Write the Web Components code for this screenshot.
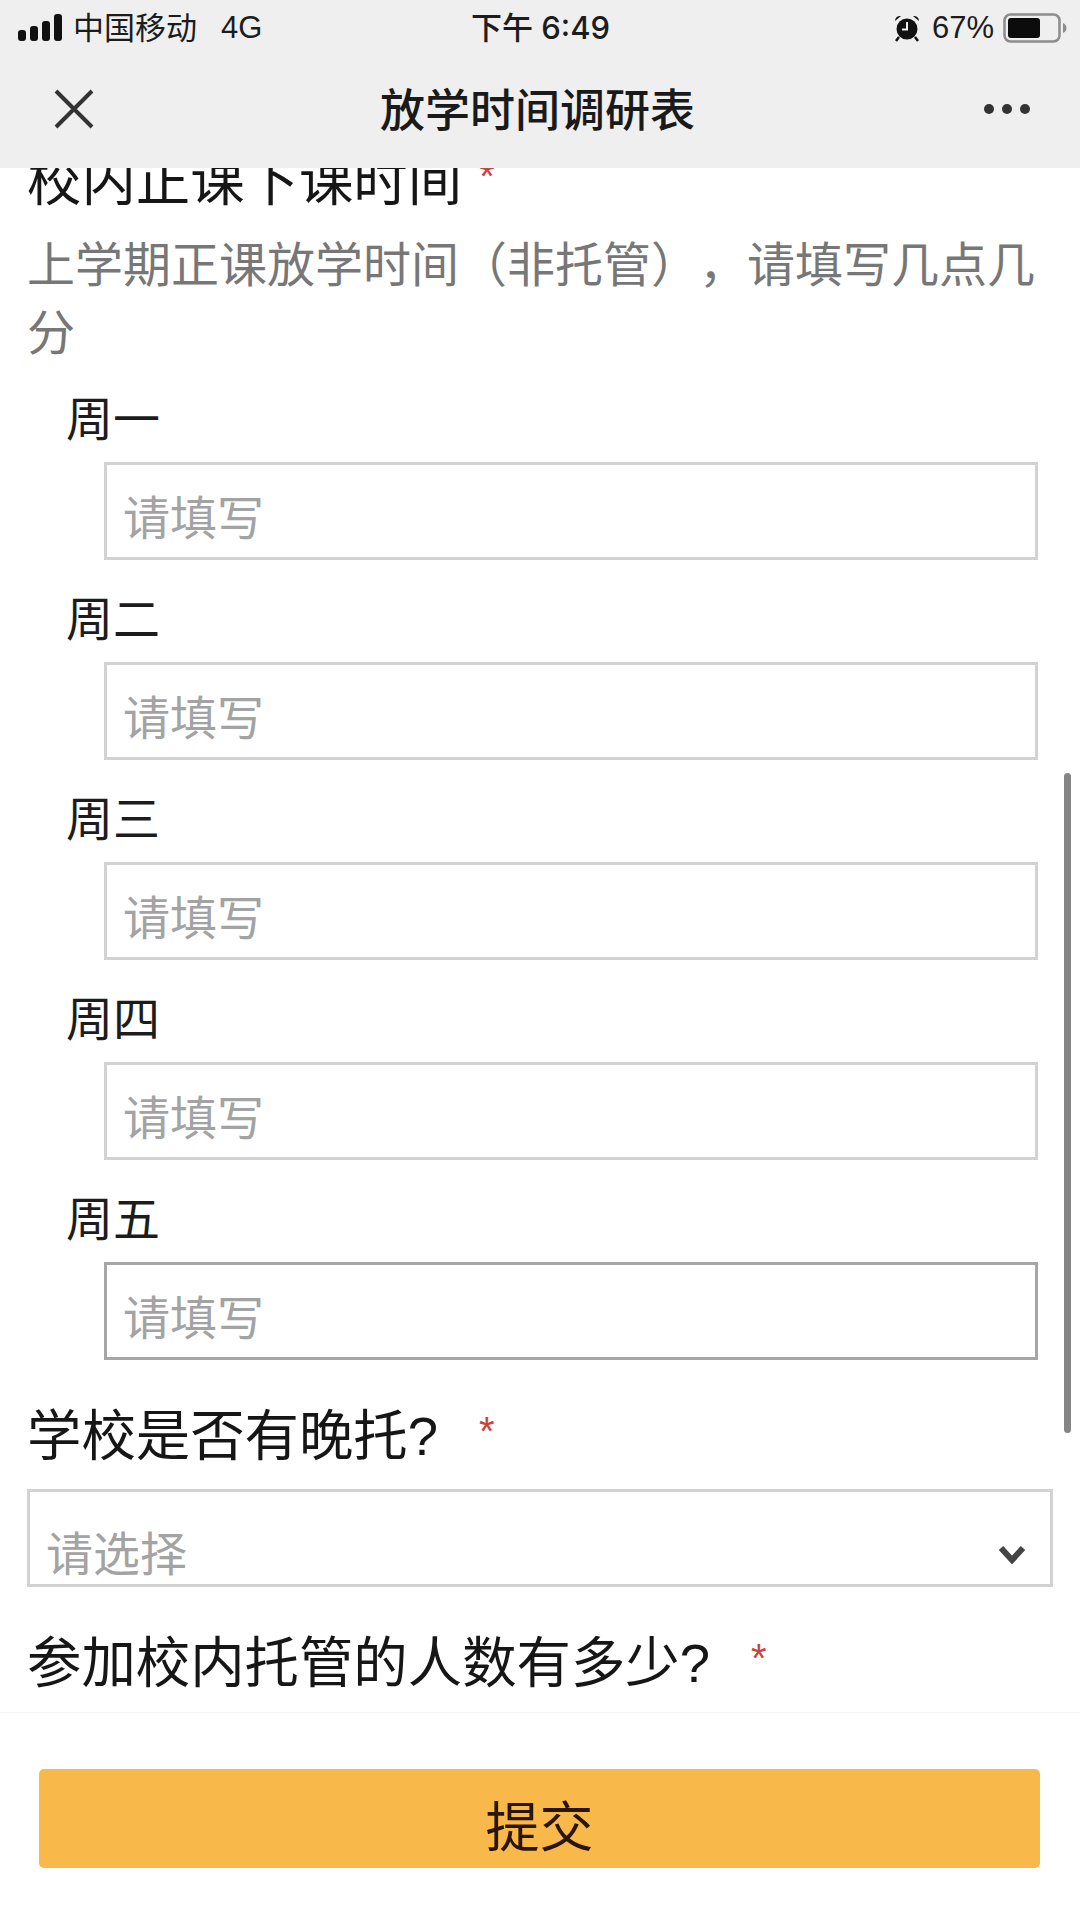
<!DOCTYPE html>
<html lang="zh-CN">
<head>
<meta charset="utf-8">
<title>放学时间调研表</title>
<style>
html, body { margin: 0; padding: 0; }
body {
    width: 1080px;
    height: 1920px;
    overflow: hidden;
    background: #fff;
    font-family: "Liberation Sans", "Noto Sans CJK SC", sans-serif;
}
survey-page { height: 1920px; }
</style>
</head>
<body>
<survey-page>
    <status-bar slot="top"></status-bar>
    <nav-bar slot="top">放学时间调研表</nav-bar>

    <form-field required>校内正课下课时间
        <span slot="hint">上学期正课放学时间（非托管），请填写几点几分</span>
        <day-input day="周一"></day-input>
        <day-input day="周二"></day-input>
        <day-input day="周三"></day-input>
        <day-input day="周四"></day-input>
        <day-input day="周五" active></day-input>
    </form-field>
    <form-field required spaced>学校是否有晚托?
        <select-box>请选择</select-box>
    </form-field>
    <form-field required spaced>参加校内托管的人数有多少?</form-field>

    <submit-bar slot="bottom">提交</submit-bar>
</survey-page>

<script>
const CJK = `"Liberation Sans", "Noto Sans CJK SC", sans-serif`;

class SurveyPage extends HTMLElement {
    constructor() {
        super();
        this.attachShadow({ mode: "open" });
        this.shadowRoot.innerHTML = `
        <style>
        :host { display: flex; flex-direction: column; position: relative; font-family: ${CJK}; }
        .content { flex: 1; overflow: hidden; min-height: 0; }
        /* the form is scrolled so the first label sits under the nav bar */
        .scrolled { margin-top: -24px; padding: 0 27px; }
        .thumb {
            position: absolute;
            right: 9px;
            top: 773px;
            width: 7px;
            height: 660px;
            border-radius: 4px;
            background: #858585;
        }
        </style>
        <slot name="top"></slot>
        <div class="content"><div class="scrolled"><slot></slot></div></div>
        <div class="thumb"></div>
        <slot name="bottom"></slot>
        `;
    }
}

class StatusBar extends HTMLElement {
    constructor() {
        super();
        this.attachShadow({ mode: "open" });
        this.shadowRoot.innerHTML = `
        <style>
        :host {
            display: grid;
            grid-template-columns: 1fr auto 1fr;
            align-items: center;
            height: 56px;
            padding: 0 13px 0 18px;
            background: #efefef;
            color: #1c1c1c;
            font-size: 31px;
        }
        .left, .right { display: flex; align-items: center; }
        .right { justify-content: flex-end; }
        .carrier { margin: -5px 0 0 10px; }
        .net { margin-left: 24px; }
        .time { font-family: Inter, "Noto Sans CJK SC", sans-serif; font-size: 31px; font-weight: 500; margin: -5px 4px 0 0; }
        .pct { margin: 0 9px 0 12px; }
        svg { display: block; }
        </style>
        <div class="left">
            <svg width="45" height="28" viewBox="0 0 45 28">
                <rect x="0" y="16" width="8" height="11" rx="3" fill="#111"/>
                <rect x="12" y="12" width="8" height="15" rx="3" fill="#111"/>
                <rect x="24" y="7" width="8" height="20" rx="3" fill="#111"/>
                <rect x="36" y="0" width="8" height="27" rx="3" fill="#111"/>
            </svg>
            <span class="carrier">中国移动</span><span class="net">4G</span>
        </div>
        <div class="time">下午 6:49</div>
        <div class="right">
            <svg width="26" height="28" viewBox="0 0 26 28">
                <circle cx="13" cy="15" r="10.5" fill="#111"/>
                <path d="M13 8v7.500h-5" fill="none" stroke="#efefef" stroke-width="2"/>
                <path d="M1 7a5 5 0 0 1 6-5zM25 7a5 5 0 0 0-6-5z" fill="#111"/>
                <path d="M5 23l-3 4M21 23l3 4" stroke="#111" stroke-width="2.5"/>
            </svg>
            <span class="pct">67%</span>
            <svg width="64" height="30" viewBox="0 0 64 30">
                <rect x="1.5" y="1.5" width="55" height="27" rx="6" fill="none" stroke="#8c8c8c" stroke-width="2.5"/>
                <rect x="5" y="5" width="32" height="20" rx="3" fill="#0c0c0c"/>
                <path d="M60 10c2.500 1 3.500 3 3.500 5s-1 4-3.500 5z" fill="#8c8c8c"/>
            </svg>
        </div>
        `;
    }
}

class NavBar extends HTMLElement {
    constructor() {
        super();
        this.attachShadow({ mode: "open" });
        this.shadowRoot.innerHTML = `
        <style>
        :host {
            display: grid;
            grid-template-columns: 1fr auto 1fr;
            align-items: center;
            height: 112px;
            padding: 0 52px 0 47px;
            background: #efefef;
            color: #1a1a1a;
        }
        .title { font-size: 45px; font-weight: 500; margin-top: -10px; }
        .more { justify-self: end; display: flex; gap: 8px; margin: -6px -2px 0 0; }
        .more i { width: 10px; height: 10px; border-radius: 50%; background: #333; }
        svg { display: block; margin: -6px 0 0 7px; }
        </style>
        <svg width="40" height="40" viewBox="0 0 40 40">
            <path d="M2 2L38 38M38 2L2 38" stroke="#333" stroke-width="4"/>
        </svg>
        <div class="title"><slot></slot></div>
        <div class="more"><i></i><i></i><i></i></div>
        `;
    }
}

class FormField extends HTMLElement {
    constructor() {
        super();
        this.attachShadow({ mode: "open" });
        this.shadowRoot.innerHTML = `
        <style>
        :host { display: block; }
        :host([spaced]) .label { margin-top: 39px; }
        .label {
            display: flex;
            align-items: flex-start;
            font-size: 54.4px;
            line-height: 76px;
            color: #161616;
        }
        .star {
            display: none;
            margin-left: 17px;
            font-size: 40px;
            line-height: 64px;
            color: #c8453c;
        }
        :host([required]) .star { display: block; }
        :host([spaced]) .star { margin-left: 41px; }
        .hint {
            margin-top: 12px;
            font-size: 48px;
            line-height: 68px;
            color: #777;
            word-break: break-all;
            text-spacing-trim: space-all;
        }
        .body { margin-top: 20px; }
        </style>
        <div class="label"><span><slot id="text"></slot></span><span class="star">*</span></div>
        <div class="hint"><slot name="hint"></slot></div>
        <div class="body"><slot name="controls"></slot></div>
        `;
    }
    connectedCallback() {
        // controls go under the label, the plain text stays in the label slot
        [...this.children].forEach((el) => {
            if (!el.slot) el.slot = "controls";
        });
    }
}

class DayInput extends HTMLElement {
    constructor() {
        super();
        this.attachShadow({ mode: "open" });
    }
    connectedCallback() {
        const day = this.getAttribute("day");
        this.shadowRoot.innerHTML = `
        <style>
        :host { display: block; padding-left: 39px; }
        .day { font-size: 47px; line-height: 64px; color: #1c1c1c; }
        .box {
            box-sizing: border-box;
            height: 98px;
            margin: 10px 15px 28px 38px;
            padding: 22px 16px 0;
            border: 3px solid #d2d2d2;
            font-size: 47px;
            line-height: 64px;
            color: #a3a3a3;
        }
        :host([active]) .box { border-color: #a6a6a6; }
        </style>
        <div class="day">${day}</div>
        <div class="box">请填写</div>
        `;
    }
}

class SelectBox extends HTMLElement {
    constructor() {
        super();
        this.attachShadow({ mode: "open" });
        this.shadowRoot.innerHTML = `
        <style>
        :host {
            display: flex;
            align-items: flex-end;
            justify-content: space-between;
            box-sizing: border-box;
            height: 98px;
            margin: -6px 0 7px;
            padding: 0 24px 0 16px;
            border: 3px solid #d2d2d2;
            font-size: 47px;
            line-height: 58px;
            color: #a3a3a3;
        }
        svg { display: block; margin-bottom: 20px; }
        </style>
        <span><slot></slot></span>
        <svg width="28" height="19" viewBox="0 0 28 19">
            <path d="M3 3L14 15L25 3" fill="none" stroke="#444" stroke-width="6"/>
        </svg>
        `;
    }
}

class SubmitBar extends HTMLElement {
    constructor() {
        super();
        this.attachShadow({ mode: "open" });
        this.shadowRoot.innerHTML = `
        <style>
        :host {
            display: block;
            box-sizing: border-box;
            height: 208px;
            padding: 56px 40px 0 39px;
            background: #fff;
            border-top: 1px solid #f4f4f4;
        }
        .btn {
            box-sizing: border-box;
            height: 99px;
            padding-top: 9px;
            display: flex;
            align-items: center;
            justify-content: center;
            border-radius: 5px;
            background: #f8b94a;
            color: #2a1608;
            font-size: 54px;
        }
        </style>
        <div class="btn"><slot></slot></div>
        `;
    }
}

customElements.define("survey-page", SurveyPage);
customElements.define("status-bar", StatusBar);
customElements.define("nav-bar", NavBar);
customElements.define("form-field", FormField);
customElements.define("day-input", DayInput);
customElements.define("select-box", SelectBox);
customElements.define("submit-bar", SubmitBar);
</script>
</body>
</html>
